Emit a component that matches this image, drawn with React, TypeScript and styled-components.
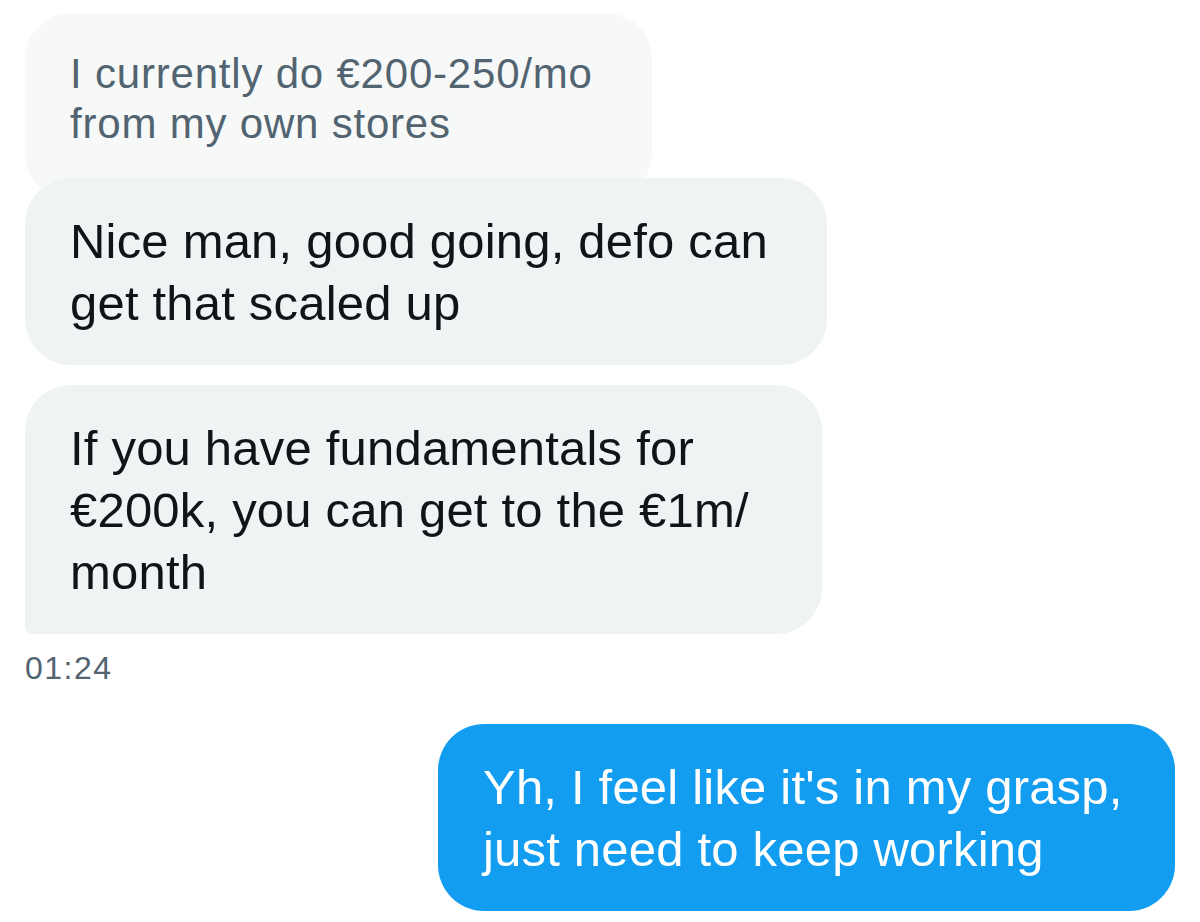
import React from 'react';
import styled, { createGlobalStyle, css } from 'styled-components';

const GlobalStyle = createGlobalStyle`
  html, body {
    margin: 0;
    padding: 0;
    background: #ffffff;
  }

  body {
    font-family: 'Liberation Sans', Arial, sans-serif;
    -webkit-font-smoothing: antialiased;
  }
`;

type Variant = 'quoted' | 'received' | 'sent';

interface Message {
  id: string;
  variant: Variant;
  width: number;
  lines: string[];
  tail?: boolean;
}

const messages: Message[] = [
  {
    id: 'm1',
    variant: 'quoted',
    width: 627,
    lines: ['I currently do €200-250/mo', 'from my own stores'],
  },
  {
    id: 'm2',
    variant: 'received',
    width: 802,
    lines: ['Nice man, good going, defo can', 'get that scaled up'],
  },
  {
    id: 'm3',
    variant: 'received',
    width: 797,
    tail: true,
    lines: [
      'If you have fundamentals for',
      '€200k, you can get to the €1m/',
      'month',
    ],
  },
];

const sent: Message = {
  id: 'm4',
  variant: 'sent',
  width: 737,
  lines: ["Yh, I feel like it's in my grasp,", 'just need to keep working'],
};

const Thread = styled.main`
  display: flex;
  flex-direction: column;
  padding: 13px 25px 0 25px;
  min-height: 922px;
  box-sizing: border-box;
`;

const Group = styled.section<{ $align: 'start' | 'end' }>`
  display: flex;
  flex-direction: column;
  align-items: ${({ $align }) => ($align === 'start' ? 'flex-start' : 'flex-end')};
  gap: 20px;
`;

const Bubble = styled.div<{ $variant: Variant; $width: number; $tail?: boolean }>`
  box-sizing: border-box;
  width: ${({ $width }) => $width}px;
  border-radius: 46px;
  padding: 32px 40px 31px 45px;
  font-size: 49px;
  line-height: 62px;
  letter-spacing: 0.2px;
  white-space: nowrap;

  ${({ $variant }) =>
    $variant === 'quoted' &&
    css`
      background: #f7f9f9;
      color: #536471;
      font-size: 42px;
      line-height: 50px;
      letter-spacing: 0.8px;
      padding: 36px 40px 51px 45px;
      margin-bottom: -42px;
    `}

  ${({ $variant }) =>
    $variant === 'received' &&
    css`
      background: #eff3f4;
      color: #0f1419;
    `}

  ${({ $variant }) =>
    $variant === 'sent' &&
    css`
      background: #129df1;
      color: #ffffff;
    `}

  ${({ $tail }) =>
    $tail &&
    css`
      border-bottom-left-radius: 8px;
    `}
`;

const Time = styled.time`
  display: block;
  margin-top: 16px;
  font-size: 32px;
  line-height: 36px;
  letter-spacing: 1.5px;
  color: #536471;
`;

const SentGroup = styled(Group)`
  margin-top: 38px;
`;

function BubbleText({ lines }: { lines: string[] }) {
  return (
    <>
      {lines.map((line, i) => (
        <React.Fragment key={i}>
          {i > 0 && <br />}
          {line}
        </React.Fragment>
      ))}
    </>
  );
}

export default function App() {
  return (
    <>
      <GlobalStyle />
      <Thread>
        <Group $align="start">
          {messages.map((m) => (
            <Bubble key={m.id} $variant={m.variant} $width={m.width} $tail={m.tail}>
              <BubbleText lines={m.lines} />
            </Bubble>
          ))}
        </Group>
        <Time>01:24</Time>
        <SentGroup $align="end">
          <Bubble $variant={sent.variant} $width={sent.width}>
            <BubbleText lines={sent.lines} />
          </Bubble>
        </SentGroup>
      </Thread>
    </>
  );
}
